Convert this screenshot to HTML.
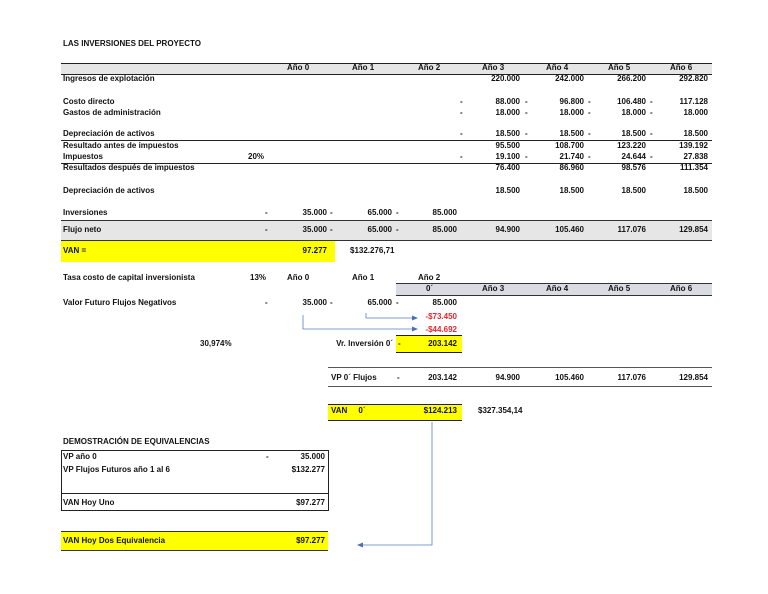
<!DOCTYPE html>
<html><head><meta charset="utf-8">
<style>
html,body{margin:0;padding:0;background:#fff;}
body{width:768px;height:594px;position:relative;overflow:hidden;font-family:"Liberation Sans",sans-serif;}
.t{position:absolute;font-size:8px;line-height:10px;white-space:nowrap;color:#111;font-weight:bold;}
.b{position:absolute;}
.red{color:#e8262b;}
</style></head><body>

<div class="b" style="left:61px;top:63px;width:651px;height:10px;background:#e6e6e6;border-top:1.5px solid #222;border-bottom:1px solid #222;"></div>
<div class="b" style="left:61px;top:140px;width:651px;height:0;border-top:1px solid #222;"></div>
<div class="b" style="left:61px;top:163px;width:651px;height:0;border-top:1px solid #222;"></div>
<div class="b" style="left:61px;top:220px;width:651px;height:19px;background:#e6e6e6;border-top:1.5px solid #333;border-bottom:1.5px solid #333;"></div>
<div class="b" style="left:61px;top:241px;width:274px;height:21px;background:#ffff00;"></div>

<div class="b" style="left:396px;top:283px;width:316px;height:11px;background:#d9dde3;border-top:1.5px solid #333;border-bottom:1px solid #333;"></div>
<div class="b" style="left:396px;top:335px;width:66px;height:16px;background:#ffff00;border-top:1px solid #222;border-bottom:1px solid #222;"></div>
<div class="b" style="left:328px;top:367px;width:384px;height:18px;border-top:1.5px solid #555;border-bottom:1.5px solid #555;"></div>
<div class="b" style="left:328px;top:404px;width:134px;height:15px;background:#ffff00;border-top:1px solid #222;border-bottom:1px solid #222;"></div>

<div class="b" style="left:61px;top:450px;width:266px;height:59px;border:1px solid #222;"></div>
<div class="b" style="left:61px;top:493px;width:267px;height:0;border-top:1px solid #222;"></div>
<div class="b" style="left:61px;top:531px;width:267px;height:18px;background:#ffff00;border-top:1px solid #333;border-bottom:1px solid #333;"></div>

<svg class="b" style="left:0;top:0" width="768" height="594">
<g stroke="#5b7ec2" stroke-width="0.8" fill="none">
<path d="M366 313 V318 H413"/>
<path d="M303 315 V329 H413"/>
<path d="M432 422 V545 H362"/>
</g>
<g fill="#4a6fb8">
<path d="M418 318 L412 315.5 L412 320.5Z"/>
<path d="M418 329 L412 326.5 L412 331.5Z"/>
<path d="M357 545 L363 542.5 L363 547.5Z"/>
</g>
</svg>

<div class="t" style="left:63px;top:39px">LAS INVERSIONES DEL PROYECTO</div>

<div class="t" style="left:287px;top:63px">Año 0</div>
<div class="t" style="left:352px;top:63px">Año 1</div>
<div class="t" style="left:418px;top:63px">Año 2</div>
<div class="t" style="left:482px;top:63px">Año 3</div>
<div class="t" style="left:546px;top:63px">Año 4</div>
<div class="t" style="left:608px;top:63px">Año 5</div>
<div class="t" style="left:670px;top:63px">Año 6</div>

<div class="t" style="left:63px;top:74px">Ingresos de explotación</div>
<div class="t" style="right:248px;top:74px">220.000</div>
<div class="t" style="right:184px;top:74px">242.000</div>
<div class="t" style="right:122px;top:74px">266.200</div>
<div class="t" style="right:60px;top:74px">292.820</div>

<div class="t" style="left:63px;top:97px">Costo directo</div>
<div class="t" style="left:460px;top:97px">-</div>
<div class="t" style="right:248px;top:97px">88.000 </div><div class="t" style="left:525px;top:97px">-</div>
<div class="t" style="right:184px;top:97px">96.800</div><div class="t" style="left:588px;top:97px">-</div>
<div class="t" style="right:122px;top:97px">106.480</div><div class="t" style="left:650px;top:97px">-</div>
<div class="t" style="right:60px;top:97px">117.128</div>

<div class="t" style="left:63px;top:108px">Gastos de administración</div>
<div class="t" style="left:460px;top:108px">-</div>
<div class="t" style="right:248px;top:108px">18.000</div><div class="t" style="left:525px;top:108px">-</div>
<div class="t" style="right:184px;top:108px">18.000</div><div class="t" style="left:588px;top:108px">-</div>
<div class="t" style="right:122px;top:108px">18.000</div><div class="t" style="left:650px;top:108px">-</div>
<div class="t" style="right:60px;top:108px">18.000</div>

<div class="t" style="left:63px;top:129px">Depreciación de activos</div>
<div class="t" style="left:460px;top:129px">-</div>
<div class="t" style="right:248px;top:129px">18.500</div><div class="t" style="left:525px;top:129px">-</div>
<div class="t" style="right:184px;top:129px">18.500</div><div class="t" style="left:588px;top:129px">-</div>
<div class="t" style="right:122px;top:129px">18.500</div><div class="t" style="left:650px;top:129px">-</div>
<div class="t" style="right:60px;top:129px">18.500</div>

<div class="t" style="left:63px;top:141px">Resultado antes de impuestos</div>
<div class="t" style="right:248px;top:141px">95.500</div>
<div class="t" style="right:184px;top:141px">108.700</div>
<div class="t" style="right:122px;top:141px">123.220</div>
<div class="t" style="right:60px;top:141px">139.192</div>

<div class="t" style="left:63px;top:152px">Impuestos</div>
<div class="t" style="left:248px;top:152px">20%</div>
<div class="t" style="left:460px;top:152px">-</div>
<div class="t" style="right:248px;top:152px">19.100</div><div class="t" style="left:525px;top:152px">-</div>
<div class="t" style="right:184px;top:152px">21.740</div><div class="t" style="left:588px;top:152px">-</div>
<div class="t" style="right:122px;top:152px">24.644</div><div class="t" style="left:650px;top:152px">-</div>
<div class="t" style="right:60px;top:152px">27.838</div>

<div class="t" style="left:63px;top:163px">Resultados después de impuestos</div>
<div class="t" style="right:248px;top:163px">76.400</div>
<div class="t" style="right:184px;top:163px">86.960</div>
<div class="t" style="right:122px;top:163px">98.576</div>
<div class="t" style="right:60px;top:163px">111.354</div>

<div class="t" style="left:63px;top:186px">Depreciación de activos</div>
<div class="t" style="right:248px;top:186px">18.500</div>
<div class="t" style="right:184px;top:186px">18.500</div>
<div class="t" style="right:122px;top:186px">18.500</div>
<div class="t" style="right:60px;top:186px">18.500</div>

<div class="t" style="left:63px;top:208px">Inversiones</div>
<div class="t" style="left:265px;top:208px">-</div>
<div class="t" style="right:441px;top:208px">35.000</div><div class="t" style="left:330px;top:208px">-</div>
<div class="t" style="right:376px;top:208px">65.000</div><div class="t" style="left:396px;top:208px">-</div>
<div class="t" style="right:311px;top:208px">85.000</div>

<div class="t" style="left:63px;top:225px">Flujo neto</div>
<div class="t" style="left:265px;top:225px">-</div>
<div class="t" style="right:441px;top:225px">35.000</div><div class="t" style="left:330px;top:225px">-</div>
<div class="t" style="right:376px;top:225px">65.000</div><div class="t" style="left:396px;top:225px">-</div>
<div class="t" style="right:311px;top:225px">85.000</div>
<div class="t" style="right:248px;top:225px">94.900</div>
<div class="t" style="right:184px;top:225px">105.460</div>
<div class="t" style="right:122px;top:225px">117.076</div>
<div class="t" style="right:60px;top:225px">129.854</div>

<div class="t" style="left:63px;top:246px">VAN =</div>
<div class="t" style="right:441px;top:246px">97.277</div>
<div class="t" style="left:350px;top:246px">$132.276,71</div>

<div class="t" style="left:63px;top:273px">Tasa costo de capital inversionista</div>
<div class="t" style="left:250px;top:273px">13%</div>
<div class="t" style="left:287px;top:273px">Año 0</div>
<div class="t" style="left:352px;top:273px">Año 1</div>
<div class="t" style="left:418px;top:273px">Año 2</div>
<div class="t" style="left:426px;top:284px">0´</div>
<div class="t" style="left:482px;top:284px">Año 3</div>
<div class="t" style="left:546px;top:284px">Año 4</div>
<div class="t" style="left:608px;top:284px">Año 5</div>
<div class="t" style="left:670px;top:284px">Año 6</div>

<div class="t" style="left:63px;top:298px">Valor Futuro Flujos Negativos</div>
<div class="t" style="left:265px;top:298px">-</div>
<div class="t" style="right:441px;top:298px">35.000</div><div class="t" style="left:330px;top:298px">-</div>
<div class="t" style="right:376px;top:298px">65.000</div><div class="t" style="left:396px;top:298px">-</div>
<div class="t" style="right:311px;top:298px">85.000</div>
<div class="t red" style="right:311px;top:312px">-$73.450</div>
<div class="t red" style="right:311px;top:325px">-$44.692</div>

<div class="t" style="left:200px;top:339px">30,974%</div>
<div class="t" style="right:375px;top:339px">Vr. Inversión 0´</div>
<div class="t" style="left:398px;top:339px">-</div>
<div class="t" style="right:311px;top:339px">203.142</div>

<div class="t" style="left:331px;top:373px">VP 0´ Flujos</div>
<div class="t" style="left:397px;top:373px">-</div>
<div class="t" style="right:311px;top:373px">203.142</div>
<div class="t" style="right:248px;top:373px">94.900</div>
<div class="t" style="right:184px;top:373px">105.460</div>
<div class="t" style="right:122px;top:373px">117.076</div>
<div class="t" style="right:60px;top:373px">129.854</div>

<div class="t" style="left:331px;top:406px">VAN &nbsp;&nbsp;&nbsp; 0´</div>
<div class="t" style="right:311px;top:406px">$124.213</div>
<div class="t" style="left:478px;top:406px">$327.354,14</div>

<div class="t" style="left:63px;top:437px">DEMOSTRACIÓN DE EQUIVALENCIAS</div>
<div class="t" style="left:63px;top:452px">VP año 0</div>
<div class="t" style="left:266px;top:452px">-</div>
<div class="t" style="right:443px;top:452px">35.000</div>
<div class="t" style="left:63px;top:465px">VP Flujos Futuros año 1 al 6</div>
<div class="t" style="right:443px;top:465px">$132.277</div>
<div class="t" style="left:63px;top:498px">VAN Hoy Uno</div>
<div class="t" style="right:443px;top:498px">$97.277</div>
<div class="t" style="left:63px;top:536px">VAN Hoy Dos Equivalencia</div>
<div class="t" style="right:443px;top:536px">$97.277</div>

</body></html>
